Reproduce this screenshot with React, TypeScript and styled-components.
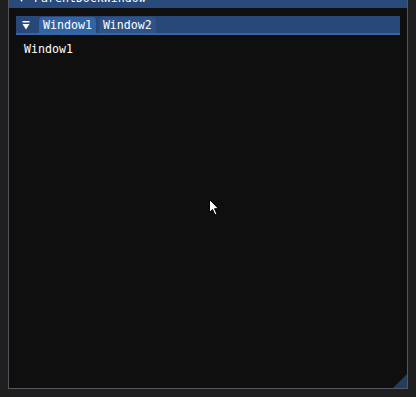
import React from "react";
import styled, { createGlobalStyle } from "styled-components";

const Global = createGlobalStyle`
  html, body { margin: 0; padding: 0; background: #1f1f1f; overflow: hidden; }
  body { font-family: "DejaVu Sans Mono", "Liberation Mono", monospace; }
  #root { width: 416px; height: 397px; }
`;

const Page = styled.div`
  width: 416px;
  height: 397px;
  padding: 0 8px 8px 8px;
  box-sizing: border-box;
  overflow: hidden;
  position: relative;
`;

const Window = styled.div`
  position: relative;
  margin-top: -12px;
  height: 401px;
  box-sizing: border-box;
  border: 1px solid #55555f;
  background: #0f0f0f;
  display: flex;
  flex-direction: column;
`;

const TitleBar = styled.div`
  height: 19px;
  flex: none;
  background: #294a7a;
  display: flex;
  align-items: center;
  padding-left: 9px;
  gap: 9px;
  color: #ffffff;
  font-size: 11.6px;
  line-height: 19px;
`;

const Body = styled.div`
  flex: 1;
  padding: 8px 7px;
  display: flex;
  flex-direction: column;
`;

const TabBar = styled.div`
  height: 17px;
  background: #284879;
  border-bottom: 2px solid #3467a8;
  display: flex;
  align-items: flex-end;
  flex: none;
`;

const CollapseButton = styled.div`
  width: 20px;
  height: 17px;
  display: flex;
  align-items: center;
  justify-content: center;
  margin-right: 3px;
`;

const Tab = styled.div<{ $active?: boolean }>`
  height: 16px;
  padding: 0 4px;
  margin-right: 3px;
  border-radius: 4px 4px 0 0;
  background: ${(p) => (p.$active ? "#3264a3" : "#2d5387")};
  color: #ffffff;
  font-size: 11.6px;
  line-height: 16px;
  white-space: nowrap;
`;

const Content = styled.div`
  padding: 8px;
  color: #ffffff;
  font-size: 11.6px;
  line-height: 13px;
`;

const Grip = styled.svg`
  position: absolute;
  right: 0;
  bottom: 0;
`;

const Cursor = styled.svg`
  position: absolute;
  left: 209px;
  top: 199px;
`;

export default function App() {
  return (
    <>
      <Global />
      <Page>
        <Window>
          <TitleBar>
            <svg width="7" height="6" viewBox="0 0 7 6">
              <path d="M0 0 H7 L3.5 6 Z" fill="#ffffff" />
            </svg>
            <span>ParentDockWindow</span>
          </TitleBar>
          <Body>
            <TabBar>
              <CollapseButton>
                <svg width="8" height="10" viewBox="0 0 8 10">
                  <rect x="0.5" y="1" width="7" height="1.5" fill="#ffffff" />
                  <path d="M0.5 4 H7.5 L4 9.5 Z" fill="#ffffff" />
                </svg>
              </CollapseButton>
              <Tab $active>Window1</Tab>
              <Tab>Window2</Tab>
            </TabBar>
            <Content>Window1</Content>
          </Body>
          <Grip width="14" height="14" viewBox="0 0 14 14">
            <path d="M14 0 V14 H0 Z" fill="#243d5e" />
          </Grip>
        </Window>
        <Cursor width="12" height="18" viewBox="0 0 12 18">
          <path
            d="M0.5 0.5 L0.5 13.5 L3.5 10.5 L6 16 L8 15 L5.5 9.7 L9.5 9.7 Z"
            fill="#ffffff"
            stroke="#000000"
            strokeWidth="1"
          />
        </Cursor>
      </Page>
    </>
  );
}
